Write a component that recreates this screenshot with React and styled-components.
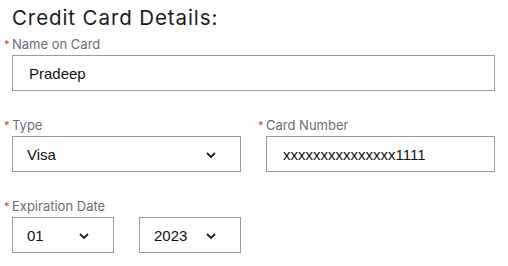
import styled, { createGlobalStyle } from 'styled-components'

const GlobalStyle = createGlobalStyle`
  body {
    margin: 0;
    background: #fff;
    font-family: Inter, "Noto Sans", sans-serif;
  }
`

const Chevron = () => (
  <ChevronIcon width="10" height="6" viewBox="0 0 10 6">
    <path d="M1 1l4 4 4-4" fill="none" stroke="#1f1f1f" strokeWidth="1.8" />
  </ChevronIcon>
)

const Field = ({ label, children }) => (
  <FieldWrapper>
    <Label>
      <Required title="required">*</Required>
      {label}
    </Label>
    {children}
  </FieldWrapper>
)

const Select = ({ value, options }) => (
  <SelectWrapper>
    <SelectField defaultValue={value}>
      {options.map((o) => (
        <option key={o}>{o}</option>
      ))}
    </SelectField>
    <Chevron />
  </SelectWrapper>
)

const App = () => {
  return (
    <Page>
      <GlobalStyle />
      <Title>Credit Card Details:</Title>
      <Field label="Name on Card">
        <InputField defaultValue="Pradeep" />
      </Field>
      <Row>
        <Field label="Type">
          <Select value="Visa" options={['Visa', 'Mastercard', 'Amex']} />
        </Field>
        <Field label="Card Number">
          <InputField defaultValue="xxxxxxxxxxxxxxx1111" />
        </Field>
      </Row>
      <Row>
        <Field label="Expiration Date">
          <DateRow>
            <Select
              value="01"
              options={['01', '02', '03', '04', '05', '06', '07', '08', '09', '10', '11', '12']}
            />
            <Select value="2023" options={['2023', '2024', '2025', '2026']} />
          </DateRow>
        </Field>
      </Row>
    </Page>
  )
}

const Page = styled.div`
  width: 483px;
  padding: 6px 0 0 12px;
`

const Title = styled.h2`
  margin: 0 0 6px 0;
  font-size: 20.5px;
  line-height: 24px;
  font-weight: 400;
  letter-spacing: 0.9px;
  color: #1b1b1b;
`

const Row = styled.div`
  display: grid;
  grid-template-columns: 1fr 1fr;
  gap: 25px;
  margin-top: 26px;
`

const DateRow = styled.div`
  display: grid;
  grid-template-columns: 1fr 1fr;
  gap: 25px;
`

const FieldWrapper = styled.div`
  display: flex;
  flex-direction: column;
`

const Label = styled.label`
  position: relative;
  font-size: 13px;
  line-height: 16px;
  margin-bottom: 3px;
  color: #6b6b79;
`

const Required = styled.span`
  position: absolute;
  left: -8px;
  top: 0;
  color: #e0401f;
  font-size: 11px;
`

const InputField = styled.input`
  display: block;
  box-sizing: border-box;
  width: 100%;
  height: 36px;
  border: 1px solid #9a9a9a;
  border-radius: 0;
  outline: 0;
  padding: 0 15px 0 16px;
  font-family: "Liberation Sans", Arial, sans-serif;
  font-size: 15px;
  color: #111;
  background: #fff;
`

const SelectWrapper = styled.div`
  position: relative;
`

const SelectField = styled.select`
  display: block;
  box-sizing: border-box;
  width: 100%;
  height: 36px;
  border: 1px solid #9a9a9a;
  border-radius: 0;
  outline: 0;
  padding: 0 30px 0 14px;
  appearance: none;
  font-family: "Liberation Sans", Arial, sans-serif;
  font-size: 15px;
  color: #111;
  background: #fff;
`

const ChevronIcon = styled.svg`
  position: absolute;
  right: 25px;
  top: 16px;
  pointer-events: none;
`

export default App
